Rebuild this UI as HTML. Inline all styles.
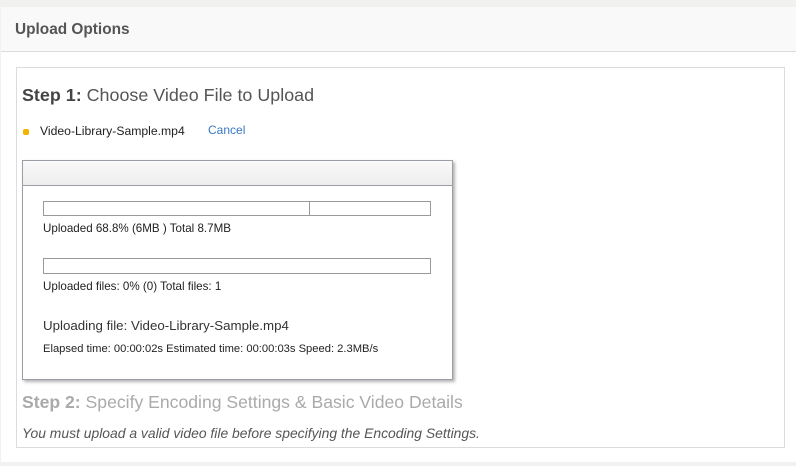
<!DOCTYPE html>
<html><head><style>
*{margin:0;padding:0;box-sizing:border-box}
body{width:796px;height:466px;background:#f1f1ef;font-family:"Liberation Sans",sans-serif;position:relative;overflow:hidden}
.panel{position:absolute;left:1px;top:7px;width:795px;height:455px;background:#fff}
.hdr{position:absolute;left:0;top:0;width:795px;height:45px;background:#f9f9f9;border-bottom:1px solid #dcdcdc}
.hdr span{position:absolute;left:14px;top:14px;font-size:15.4px;font-weight:bold;color:#555}
.box{position:absolute;left:16px;top:67px;width:769px;height:381px;border:1px solid #dcdcdc;background:#fff}
.t{position:absolute;white-space:nowrap}
.bar{position:absolute;border:1px solid #999;background:#fff}
.dlg{position:absolute;left:22px;top:160px;width:431px;height:220px;border:1px solid #9a9ea6;background:#fff;box-shadow:2px 2px 3px rgba(0,0,0,.3)}
.dh{height:25px;border-bottom:1px solid #9a9ea6;background:linear-gradient(#fafafa,#ededed)}
</style></head><body>
<div class="panel"><div class="hdr"><span>Upload Options</span></div></div>
<div class="box"></div>
<div class="t" style="left:22px;top:85px;font-size:17.9px;color:#555"><b style="color:#444">Step 1:</b> Choose Video File to Upload</div>
<div style="position:absolute;left:23px;top:129px;width:6px;height:6px;border-radius:2px;background:#f0b400"></div>
<div class="t" style="left:40px;top:124px;font-size:12.2px;color:#222">Video-Library-Sample.mp4</div>
<div class="t" style="left:208px;top:123px;font-size:12px;color:#3a78c2">Cancel</div>
<div class="dlg"><div class="dh"></div></div>
<div class="bar" style="left:43px;top:201px;width:388px;height:15px"></div>
<div style="position:absolute;left:309px;top:201px;width:1px;height:15px;background:#999"></div>
<div class="t" style="left:43px;top:222px;font-size:11.6px;color:#222">Uploaded 68.8% (6MB ) Total 8.7MB</div>
<div class="bar" style="left:43px;top:258px;width:388px;height:16px"></div>
<div class="t" style="left:43px;top:280px;font-size:11.6px;color:#222">Uploaded files: 0% (0) Total files: 1</div>
<div class="t" style="left:43px;top:318px;font-size:13.3px;color:#333">Uploading file: Video-Library-Sample.mp4</div>
<div class="t" style="left:43px;top:343px;font-size:11.2px;color:#222">Elapsed time: 00:00:02s Estimated time: 00:00:03s Speed: 2.3MB/s</div>
<div class="t" style="left:22px;top:392px;font-size:17.6px;color:#aaa"><b>Step 2:</b> Specify Encoding Settings &amp; Basic Video Details</div>
<div class="t" style="left:22px;top:425px;font-size:13.9px;color:#555;font-style:italic">You must upload a valid video file before specifying the Encoding Settings.</div>
</body></html>
